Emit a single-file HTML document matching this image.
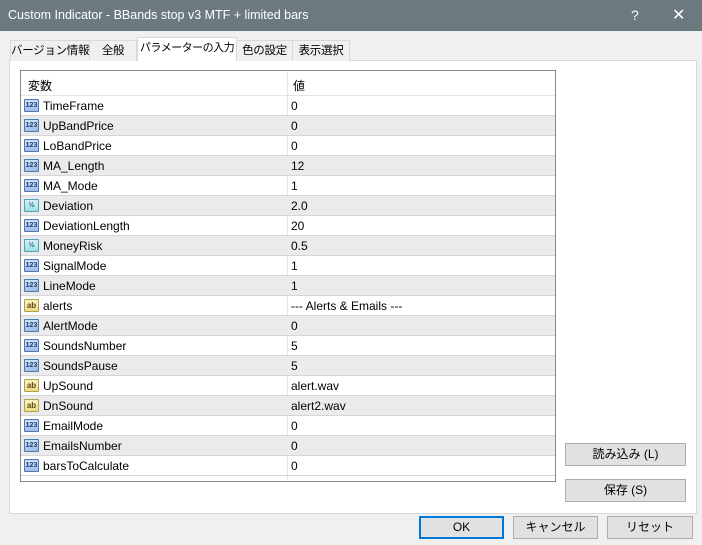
<!DOCTYPE html><html><head><meta charset="utf-8"><style>
*{box-sizing:border-box;margin:0;padding:0}
body{width:702px;height:545px;background:#f0f0f0;font-family:"Liberation Sans","Noto Sans CJK JP",sans-serif;font-size:12px;color:#000;position:relative;overflow:hidden}
.title{position:absolute;left:0;top:0;width:702px;height:31px;background:#6c7a80;color:#fff;font-size:12.5px;line-height:31px;padding-left:8px}
.title .q{position:absolute;left:631px;top:0;font-size:14px}
.title .x{position:absolute;left:672px;top:0;font-size:16px}
.tab{position:absolute;top:40px;height:21px;border:1px solid #d9d9d9;border-bottom:none;background:#f0f0f0;line-height:20px;text-align:center;font-size:11.5px;white-space:nowrap;overflow:hidden;letter-spacing:-0.3px}
.tab.a{top:37px;height:24px;background:#fff;border-color:#d9d9d9;z-index:2;font-size:11px;letter-spacing:-0.5px}
.panel{position:absolute;left:9px;top:60px;width:688px;height:454px;background:#fff;border:1px solid #d9d9d9}
.list{position:absolute;left:20px;top:70px;width:536px;height:412px;border:1px solid #828790;background:#fff;overflow:hidden}
.hdr{position:absolute;left:0;top:0;width:534px;height:25px;border-bottom:1px solid #e5e5e5}
.hdr span{position:absolute;top:6px}
.vl{position:absolute;left:266px;top:0;width:1px;height:410px;background:#e5e5e5}
.row{position:absolute;left:0;width:534px;height:20px;border-bottom:1px solid #d6d6d6;line-height:20px}
.row.g{background:#ebebeb}
.row .nm{position:absolute;left:22px}
.row .v{position:absolute;left:270px}
.ic{position:absolute;left:3px;top:3px;width:15px;height:13px;border:1px solid #4a78b5;background:linear-gradient(#cfe0f5,#9dbde6);font-size:7px;font-weight:bold;line-height:11px;text-align:center;color:#1d3e73;border-radius:1px}
.ic.h{border-color:#4aa5b5;background:linear-gradient(#d5f2f5,#9fdde6);color:#1d5a73}
.ic.s{border-color:#b5a04a;background:linear-gradient(#fbf3c5,#eedc86);color:#5a4a10;font-size:8px}
.btn{position:absolute;height:23px;border:1px solid #adadad;background:#e1e1e1;text-align:center;line-height:21px;font-size:12px}
.ok{border:2px solid #0078d7;line-height:19px}
</style></head><body>
<div class="title">Custom Indicator - BBands stop v3 MTF + limited bars<span class="q">?</span><span class="x">✕</span></div>
<div class="panel"></div>
<div class="tab" style="left:10px;width:80px">バージョン情報</div>
<div class="tab" style="left:89px;width:48px">全般</div>
<div class="tab a" style="left:137px;width:100px">パラメーターの入力</div>
<div class="tab" style="left:236px;width:57px">色の設定</div>
<div class="tab" style="left:292px;width:58px">表示選択</div>
<div class="list">
<div class="hdr"><span style="left:7px">変数</span><span style="left:272px">値</span></div>
<div class="vl"></div>
<div id="rows"></div>
</div>
<div class="btn" style="left:565px;top:443px;width:121px">読み込み (L)</div>
<div class="btn" style="left:565px;top:479px;width:121px">保存 (S)</div>
<div class="btn ok" style="left:419px;top:516px;width:85px">OK</div>
<div class="btn" style="left:513px;top:516px;width:85px">キャンセル</div>
<div class="btn" style="left:607px;top:516px;width:86px">リセット</div>
<script>
var d=[["TimeFrame","0","i"],["UpBandPrice","0","i"],["LoBandPrice","0","i"],["MA_Length","12","i"],["MA_Mode","1","i"],["Deviation","2.0","h"],["DeviationLength","20","i"],["MoneyRisk","0.5","h"],["SignalMode","1","i"],["LineMode","1","i"],["alerts","--- Alerts & Emails ---","s"],["AlertMode","0","i"],["SoundsNumber","5","i"],["SoundsPause","5","i"],["UpSound","alert.wav","s"],["DnSound","alert2.wav","s"],["EmailMode","0","i"],["EmailsNumber","0","i"],["barsToCalculate","0","i"]];
var h="";d.forEach(function(r,i){var t=r[2]=="i"?"123":r[2]=="h"?"½":"ab";h+='<div class="row'+(i%2?' g':'')+'" style="top:'+(25+20*i)+'px"><span class="ic '+r[2]+'">'+t+'</span><span class="nm">'+r[0]+'</span><span class="v">'+r[1]+'</span></div>'});
document.getElementById("rows").innerHTML=h;
</script>
</body></html>
